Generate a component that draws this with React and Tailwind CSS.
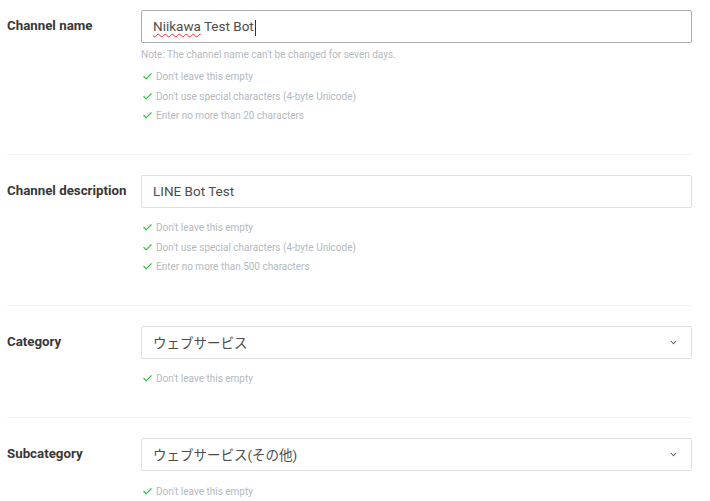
import { Check, ChevronDown } from 'lucide-react';

const font = { fontFamily: 'Roboto, "Noto Sans CJK JP", sans-serif' };

const Rule = ({ children }) => (
  <li className="flex items-center h-[19.5px] text-[10px] text-[#b4b9c1]">
    <Check className="w-[11px] h-[11px] text-[#2fc43c] mr-[3px] ml-[1px]" strokeWidth={2.5} />
    {children}
  </li>
);

const Field = ({ label, children, first }) => (
  <div className={`flex pb-[28.6px] ${first ? 'pt-[10px]' : 'pt-[20px] border-t border-[#f1f2f4]'}`}>
    <div className="w-[134px] shrink-0 h-[32px] flex items-center text-[13.3px] font-bold text-[#383838]">
      {label}
    </div>
    <div className="flex-1">{children}</div>
  </div>
);

const Box = ({ value, select, focus }) => (
  <div
    className={`h-[33px] border rounded-[2px] flex items-center justify-between px-[11px] text-[13.5px] text-[#4d4d4d] ${
      focus ? 'border-[#a9adb3]' : 'border-[#dcdfe3]'
    }`}
  >
    <span>{value}</span>
    {select && <ChevronDown className="w-[9px] h-[9px] text-[#666] mr-[2px]" strokeWidth={3} />}
  </div>
);

export default function App() {
  return (
    <div className="bg-white min-h-screen pl-[7px] pr-[18px]" style={font}>
      <Field label="Channel name" first>
        <Box
          focus
          value={
            <>
              <span className="underline decoration-wavy decoration-red-500 decoration-1 underline-offset-2">Niikawa</span> Test Bot
              <span className="inline-block w-px h-[16px] bg-[#333] align-middle ml-px" />
            </>
          }
        />
        <p className="text-[10px] text-[#b4b9c1] leading-[16px] mt-[4px]">
          Note: The channel name can't be changed for seven days.
        </p>
        <ul className="mt-[4px]">
          <Rule>Don't leave this empty</Rule>
          <Rule>Don't use special characters (4-byte Unicode)</Rule>
          <Rule>Enter no more than 20 characters</Rule>
        </ul>
      </Field>
      <Field label="Channel description">
        <Box value="LINE Bot Test" />
        <ul className="mt-[10px]">
          <Rule>Don't leave this empty</Rule>
          <Rule>Don't use special characters (4-byte Unicode)</Rule>
          <Rule>Enter no more than 500 characters</Rule>
        </ul>
      </Field>
      <Field label="Category">
        <Box value="ウェブサービス" select />
        <ul className="mt-[10px]">
          <Rule>Don't leave this empty</Rule>
        </ul>
      </Field>
      <Field label="Subcategory">
        <Box value="ウェブサービス(その他)" select />
        <ul className="mt-[10px]">
          <Rule>Don't leave this empty</Rule>
        </ul>
      </Field>
    </div>
  );
}
